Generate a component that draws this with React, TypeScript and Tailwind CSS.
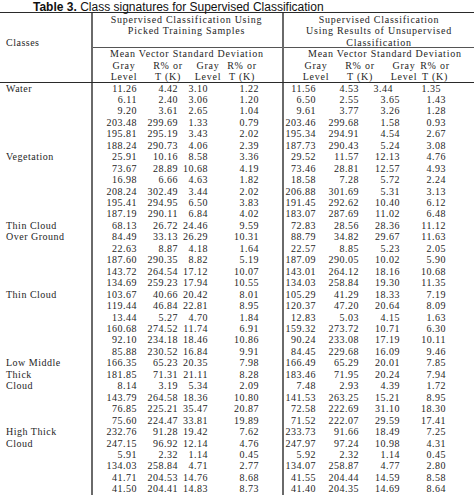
const blocks: { label: string[]; a: string[][]; b: string[][] }[] = [
  {
    label: ['Water'],
    a: [
      ['11.26', '4.42', '3.10', '1.22'],
      ['6.11', '2.40', '3.06', '1.20'],
      ['9.20', '3.61', '2.65', '1.04'],
      ['203.48', '299.69', '1.33', '0.79'],
      ['195.81', '295.19', '3.43', '2.02'],
      ['188.24', '290.73', '4.06', '2.39'],
    ],
    b: [
      ['11.56', '4.53', '3.44', '1.35'],
      ['6.50', '2.55', '3.65', '1.43'],
      ['9.61', '3.77', '3.26', '1.28'],
      ['203.46', '299.68', '1.58', '0.93'],
      ['195.34', '294.91', '4.54', '2.67'],
      ['187.73', '290.43', '5.24', '3.08'],
    ],
  },
  {
    label: ['Vegetation'],
    a: [
      ['25.91', '10.16', '8.58', '3.36'],
      ['73.67', '28.89', '10.68', '4.19'],
      ['16.98', '6.66', '4.63', '1.82'],
      ['208.24', '302.49', '3.44', '2.02'],
      ['195.41', '294.95', '6.50', '3.83'],
      ['187.19', '290.11', '6.84', '4.02'],
    ],
    b: [
      ['29.52', '11.57', '12.13', '4.76'],
      ['73.46', '28.81', '12.57', '4.93'],
      ['18.58', '7.28', '5.72', '2.24'],
      ['206.88', '301.69', '5.31', '3.13'],
      ['191.45', '292.62', '10.40', '6.12'],
      ['183.07', '287.69', '11.02', '6.48'],
    ],
  },
  {
    label: ['Thin Cloud', 'Over Ground'],
    a: [
      ['68.13', '26.72', '24.46', '9.59'],
      ['84.49', '33.13', '26.29', '10.31'],
      ['22.63', '8.87', '4.18', '1.64'],
      ['187.60', '290.35', '8.82', '5.19'],
      ['143.72', '264.54', '17.12', '10.07'],
      ['134.69', '259.23', '17.94', '10.55'],
    ],
    b: [
      ['72.83', '28.56', '28.36', '11.12'],
      ['88.79', '34.82', '29.67', '11.63'],
      ['22.57', '8.85', '5.23', '2.05'],
      ['187.09', '290.05', '10.02', '5.90'],
      ['143.01', '264.12', '18.16', '10.68'],
      ['134.03', '258.84', '19.30', '11.35'],
    ],
  },
  {
    label: ['Thin Cloud'],
    a: [
      ['103.67', '40.66', '20.42', '8.01'],
      ['119.44', '46.84', '22.81', '8.95'],
      ['13.44', '5.27', '4.70', '1.84'],
      ['160.68', '274.52', '11.74', '6.91'],
      ['92.10', '234.18', '18.46', '10.86'],
      ['85.88', '230.52', '16.84', '9.91'],
    ],
    b: [
      ['105.29', '41.29', '18.33', '7.19'],
      ['120.37', '47.20', '20.64', '8.09'],
      ['12.83', '5.03', '4.15', '1.63'],
      ['159.32', '273.72', '10.71', '6.30'],
      ['90.24', '233.08', '17.19', '10.11'],
      ['84.45', '229.68', '16.09', '9.46'],
    ],
  },
  {
    label: ['Low Middle', 'Thick', 'Cloud'],
    a: [
      ['166.35', '65.23', '20.35', '7.98'],
      ['181.85', '71.31', '21.11', '8.28'],
      ['8.14', '3.19', '5.34', '2.09'],
      ['143.79', '264.58', '18.36', '10.80'],
      ['76.85', '225.21', '35.47', '20.87'],
      ['75.60', '224.47', '33.81', '19.89'],
    ],
    b: [
      ['166.49', '65.29', '20.01', '7.85'],
      ['183.46', '71.95', '20.24', '7.94'],
      ['7.48', '2.93', '4.39', '1.72'],
      ['141.53', '263.25', '15.21', '8.95'],
      ['72.58', '222.69', '31.10', '18.30'],
      ['71.52', '222.07', '29.59', '17.41'],
    ],
  },
  {
    label: ['High Thick', 'Cloud'],
    a: [
      ['232.76', '91.28', '19.42', '7.62'],
      ['247.15', '96.92', '12.14', '4.76'],
      ['5.91', '2.32', '1.14', '0.45'],
      ['134.03', '258.84', '4.71', '2.77'],
      ['41.71', '204.53', '14.76', '8.68'],
      ['41.50', '204.41', '14.83', '8.73'],
    ],
    b: [
      ['233.73', '91.66', '18.49', '7.25'],
      ['247.97', '97.24', '10.98', '4.31'],
      ['5.92', '2.32', '1.14', '0.45'],
      ['134.07', '258.87', '4.77', '2.80'],
      ['41.55', '204.44', '14.59', '8.58'],
      ['41.40', '204.35', '14.69', '8.64'],
    ],
  },
];

// two-line unit heading, centred in a 28px slot
function Unit({ top, bottom, className }: { top: string; bottom: string; className: string }) {
  return (
    <div className={`${className} w-[28px] shrink-0 flex flex-col items-center whitespace-nowrap`}>
      <span>{top}</span>
      <span>{bottom}</span>
    </div>
  );
}

export default function App() {
  const rows = blocks.flatMap((blk) =>
    blk.a.map((a, i) => ({ label: blk.label[i] ?? '', a, b: blk.b[i] })),
  );

  return (
    <div className="w-[474px] h-[496px] overflow-hidden bg-white text-[#262626] font-['Liberation_Serif',serif] text-[10px] tracking-[0.5px]">
      {/* caption */}
      <div className="h-[12px] pl-[33px] font-['Liberation_Sans',Arial,sans-serif] text-[12px] leading-[14px] tracking-normal text-[#111] whitespace-nowrap">
        <span className="font-bold">Table 3.</span> Class signatures for Supervised Classification
      </div>

      <div className="border-t-[1.5px] border-[#2a2a2a]">
        {/* header */}
        <div className="grid grid-cols-[93px_191px_190px] border-b-[1.5px] border-[#2a2a2a] leading-[11.5px]">
          <div className="border-r-2 border-[#6a6a6a] pl-[6px] flex items-center pb-[10px]">Classes</div>
          <div className="border-r-2 border-[#6a6a6a] tracking-[0.75px]">
            <div className="h-[35px] border-b border-[#555] text-center pr-[2px] pt-[0.5px]">
              <div>Supervised Classification Using</div>
              <div>Picked Training Samples</div>
            </div>
            <div className="h-[33.5px]">
              <div className="pl-[17px] whitespace-nowrap">Mean Vector Standard Deviation</div>
              <div className="flex">
                <Unit className="ml-[17px]" top="Gray" bottom="Level" />
                <Unit className="ml-[16px]" top="R% or" bottom="T (K)" />
                <Unit className="ml-[12px]" top="Gray" bottom="Level" />
                <Unit className="ml-[6px]" top="R% or" bottom="T (K)" />
              </div>
            </div>
          </div>
          <div className="tracking-[0.75px]">
            <div className="h-[35px] border-b border-[#555] text-center pt-[0.5px]">
              <div>Supervised Classification</div>
              <div>Using Results of Unsupervised</div>
              <div>Classification</div>
            </div>
            <div className="h-[33.5px]">
              <div className="pl-[24px] whitespace-nowrap">Mean Vector Standard Deviation</div>
              <div className="flex">
                <Unit className="ml-[18px]" top="Gray" bottom="Level" />
                <Unit className="ml-[16px]" top="R% or" bottom="T (K)" />
                <Unit className="ml-[16px]" top="Gray" bottom="Level" />
                <Unit className="ml-[3px]" top="R% or" bottom="T (K)" />
              </div>
            </div>
          </div>
        </div>

        {/* body */}
        {rows.map((r, ri) => (
          <div
            key={ri}
            className="grid grid-cols-[93px_44px_41px_30px_51px_25px_32px_43px_41px_46px_28px] h-[11.46px] leading-[11.46px] whitespace-nowrap"
          >
            <div className="border-r-2 border-[#6a6a6a] pl-[6px]">{r.label}</div>
            <div className="text-right">{r.a[0]}</div>
            <div className="text-right">{r.a[1]}</div>
            <div className="text-right">{r.a[2]}</div>
            <div className="text-right">{r.a[3]}</div>
            <div className="border-r-2 border-[#6a6a6a]" />
            <div className="text-right">{r.b[0]}</div>
            <div className="text-right">{r.b[1]}</div>
            <div className={ri === 0 ? 'text-right pr-[7px]' : 'text-right'}>{r.b[2]}</div>
            <div className={ri === 0 ? 'text-right pr-[5px]' : 'text-right'}>{r.b[3]}</div>
            <div />
          </div>
        ))}
      </div>
    </div>
  );
}
